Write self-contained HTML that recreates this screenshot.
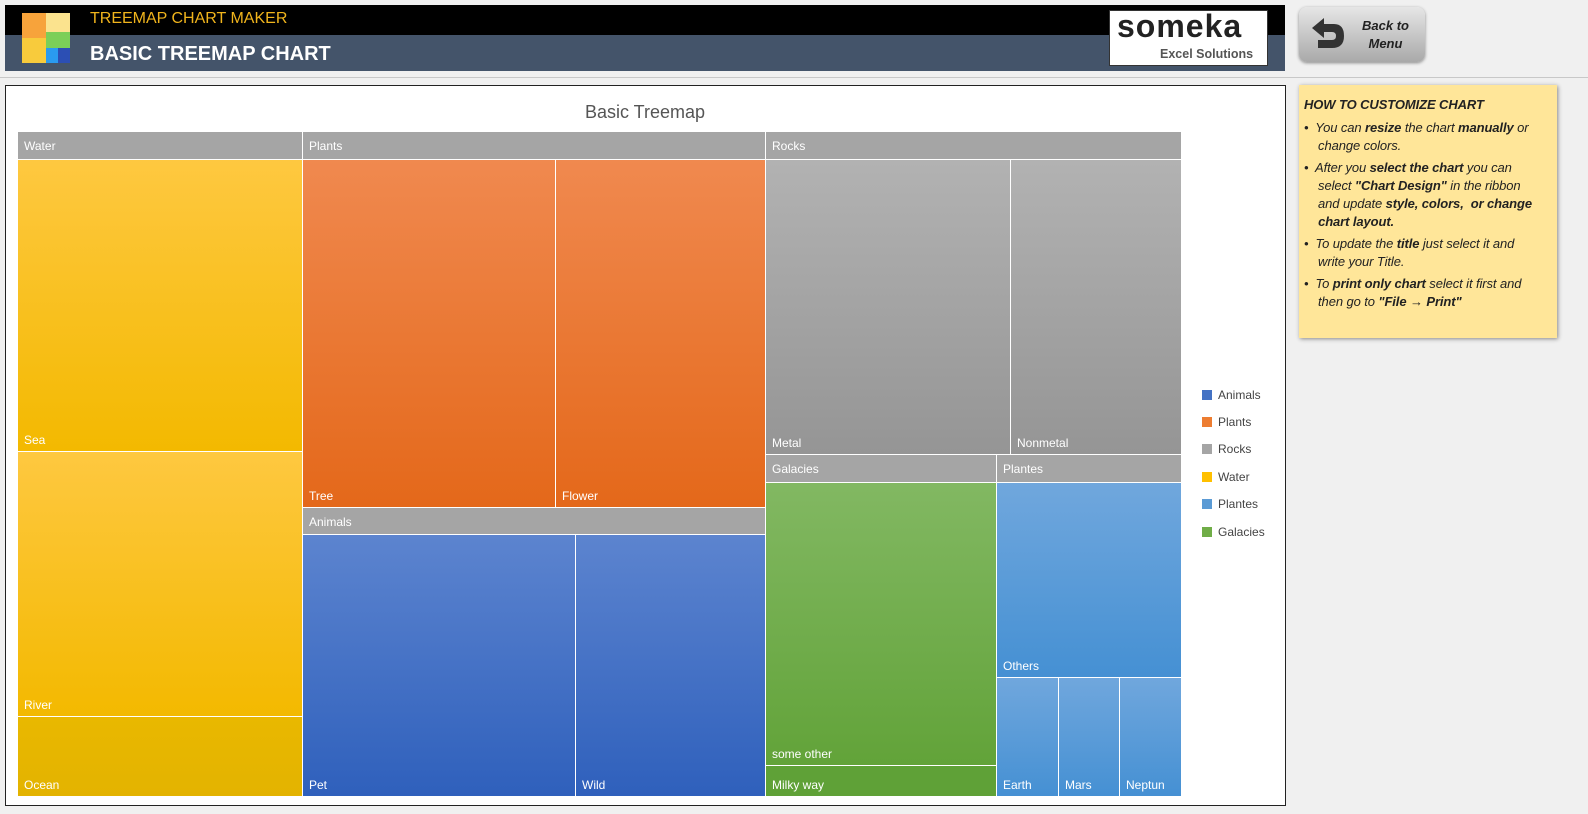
<!DOCTYPE html><html><head><style>
body{margin:0;width:1588px;height:814px;background:#f0f0f0;font-family:"Liberation Sans",sans-serif;position:relative;overflow:hidden}
.a{position:absolute}
.c{position:absolute;color:#fff;font-size:12px;box-sizing:border-box}
.c span{position:absolute;left:6px;bottom:4px}
.h{background:#a5a5a5}.h span{top:7px;bottom:auto}
.y{background:linear-gradient(#fec840,#f3b900)}
.o{background:linear-gradient(#f0894f,#e4681a)}
.g{background:linear-gradient(#b2b2b2,#959595)}
.b{background:linear-gradient(#5c84cf,#2f60bc)}
.gr{background:linear-gradient(#82b862,#62a339)}
.lb{background:linear-gradient(#70a7dd,#4590d3)}
.lg{position:absolute;left:1202px;font-size:12px;color:#444}
.lg i{display:inline-block;width:10px;height:10px;margin-right:6px;vertical-align:-1px}
.hp div{white-space:nowrap}
</style></head><body>
<div class="a" style="left:5px;top:5px;width:1280px;height:30px;background:#000"></div>
<div class="a" style="left:5px;top:35px;width:1280px;height:36px;background:#44546a"></div>
<div class="a" style="left:22px;top:13px;width:24px;height:25px;background:#f7a33b"></div>
<div class="a" style="left:46px;top:13px;width:24px;height:19px;background:#fbe38e"></div>
<div class="a" style="left:46px;top:32px;width:24px;height:16px;background:#7bcf58"></div>
<div class="a" style="left:22px;top:38px;width:24px;height:25px;background:#f8cb3c"></div>
<div class="a" style="left:46px;top:48px;width:12px;height:15px;background:#2a9bf0"></div>
<div class="a" style="left:58px;top:48px;width:12px;height:15px;background:#2c4fb4"></div>
<div class="a" style="left:90px;top:10px;color:#f0b41c;font-size:16px">TREEMAP CHART MAKER</div>
<div class="a" style="left:90px;top:43px;color:#fff;font-size:20px;font-weight:bold">BASIC TREEMAP CHART</div>
<div class="a" style="left:1109px;top:10px;width:157px;height:54px;background:#fff;border:1px solid #333"></div>
<div class="a" style="left:1117px;top:8px;font-size:32px;color:#222;font-weight:bold;letter-spacing:1px">someka</div>
<div class="a" style="left:1160px;top:47px;font-size:12.5px;font-weight:bold;color:#555">Excel Solutions</div>
<div class="a" style="left:1299px;top:7px;width:126px;height:55px;border-radius:8px;background:linear-gradient(#e6e6e6,#a9a9a9);box-shadow:0 1px 3px #888"></div>
<svg class="a" style="left:1308px;top:14px" width="40" height="42"><path d="M4 14 L16 4 L16 10 L26 10 Q36 10 36 22 Q36 34 24 34 L10 34 L10 26 L24 26 Q28 26 28 22 Q28 18 24 18 L16 18 L16 24 Z" fill="#333"/></svg>
<div class="a" style="left:1362px;top:17px;font-size:13px;font-weight:bold;font-style:italic;color:#222;text-align:center;line-height:18px">Back to<br>Menu</div>
<div class="a" style="left:0;top:77px;width:1588px;height:1px;background:#c8c8c8"></div>
<div class="a" style="left:5px;top:85px;width:1279px;height:719px;background:#fff;border:1px solid #222"></div>
<div class="a" style="left:0;top:102px;width:1290px;text-align:center;font-size:18px;color:#555">Basic Treemap</div>

<div class="c h" style="left:18px;top:132px;width:284px;height:27px"><span>Water</span></div>
<div class="c y" style="left:18px;top:160px;width:284px;height:291px"><span>Sea</span></div>
<div class="c y" style="left:18px;top:452px;width:284px;height:264px"><span>River</span></div>
<div class="c y" style="left:18px;top:717px;width:284px;height:79px;background:linear-gradient(#e9b800,#e3b300)"><span>Ocean</span></div>
<div class="c h" style="left:303px;top:132px;width:462px;height:27px"><span>Plants</span></div>
<div class="c o" style="left:303px;top:160px;width:252px;height:347px"><span>Tree</span></div>
<div class="c o" style="left:556px;top:160px;width:209px;height:347px"><span>Flower</span></div>
<div class="c h" style="left:303px;top:508px;width:462px;height:26px"><span>Animals</span></div>
<div class="c b" style="left:303px;top:535px;width:272px;height:261px"><span>Pet</span></div>
<div class="c b" style="left:576px;top:535px;width:189px;height:261px"><span>Wild</span></div>
<div class="c h" style="left:766px;top:132px;width:415px;height:27px"><span>Rocks</span></div>
<div class="c g" style="left:766px;top:160px;width:244px;height:294px"><span>Metal</span></div>
<div class="c g" style="left:1011px;top:160px;width:170px;height:294px"><span>Nonmetal</span></div>
<div class="c h" style="left:766px;top:455px;width:230px;height:27px"><span>Galacies</span></div>
<div class="c gr" style="left:766px;top:483px;width:230px;height:282px"><span>some other</span></div>
<div class="c gr" style="left:766px;top:766px;width:230px;height:30px;background:#5fa137"><span>Milky way</span></div>
<div class="c h" style="left:997px;top:455px;width:184px;height:27px"><span>Plantes</span></div>
<div class="c lb" style="left:997px;top:483px;width:184px;height:194px"><span>Others</span></div>
<div class="c lb" style="left:997px;top:678px;width:61px;height:118px"><span>Earth</span></div>
<div class="c lb" style="left:1059px;top:678px;width:60px;height:118px"><span>Mars</span></div>
<div class="c lb" style="left:1120px;top:678px;width:61px;height:118px"><span>Neptun</span></div>

<div class="lg" style="top:388px"><i style="background:#4472c4"></i>Animals</div>
<div class="lg" style="top:415px"><i style="background:#ed7d31"></i>Plants</div>
<div class="lg" style="top:442px"><i style="background:#a5a5a5"></i>Rocks</div>
<div class="lg" style="top:470px"><i style="background:#ffc000"></i>Water</div>
<div class="lg" style="top:497px"><i style="background:#5b9bd5"></i>Plantes</div>
<div class="lg" style="top:525px"><i style="background:#70ad47"></i>Galacies</div>

<div class="a hp" style="left:1299px;top:85px;width:258px;height:253px;background:#ffe699;box-shadow:1px 1px 4px #888;font-style:italic;font-size:13px;letter-spacing:-0.1px;color:#222;box-sizing:border-box;padding:11px 4px 0 5px;line-height:18px">
<b>HOW TO CUSTOMIZE CHART</b>
<div style="margin-top:5px">•&nbsp; You can <b>resize</b> the chart <b>manually</b> or<br>&nbsp;&nbsp;&nbsp;&nbsp;change colors.</div>
<div style="margin-top:4px">•&nbsp; After you <b>select the chart</b> you can<br>&nbsp;&nbsp;&nbsp;&nbsp;select <b>"Chart Design"</b> in the ribbon<br>&nbsp;&nbsp;&nbsp;&nbsp;and update <b>style, colors,&nbsp; or change</b><br>&nbsp;&nbsp;&nbsp;&nbsp;<b>chart layout.</b></div>
<div style="margin-top:4px">•&nbsp; To update the <b>title</b> just select it and<br>&nbsp;&nbsp;&nbsp;&nbsp;write your Title.</div>
<div style="margin-top:4px">•&nbsp; To <b>print only chart</b> select it first and<br>&nbsp;&nbsp;&nbsp;&nbsp;then go to <b>"File → Print"</b></div>
</div>
</body></html>
